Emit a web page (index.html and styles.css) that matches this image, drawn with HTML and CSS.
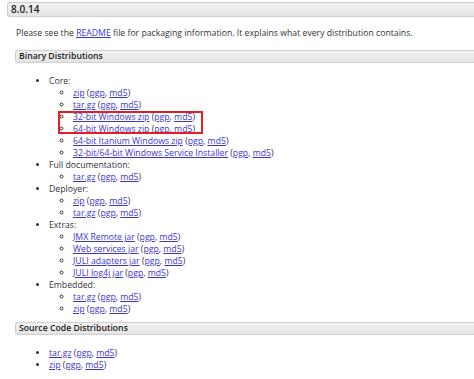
FILE: index.html
```html
<!DOCTYPE html>
<html>
<head>
<meta charset="utf-8">
<link rel="stylesheet" href="styles.css">
</head>
<body>
<div class="page">
  <h3 class="bar bar-main">8.0.14</h3>
  <div class="content">
    <p class="intro">Please see the <a href="#">README</a> file for packaging information. It explains what every distribution contains.</p>
    <h4 class="bar bar-sub">Binary Distributions</h4>
    <ul class="top">
      <li>Core:
        <ul class="sub">
          <li><a href="#">zip</a> (<a href="#">pgp</a>, <a href="#">md5</a>)</li>
          <li><a href="#">tar.gz</a> (<a href="#">pgp</a>, <a href="#">md5</a>)</li>
          <li class="hl"><a href="#">32-bit Windows zip</a> (<a href="#">pgp</a>, <a href="#">md5</a>)</li>
          <li><a href="#">64-bit Windows zip</a> (<a href="#">pgp</a>, <a href="#">md5</a>)</li>
          <li><a href="#">64-bit Itanium Windows zip</a> (<a href="#">pgp</a>, <a href="#">md5</a>)</li>
          <li><a href="#">32-bit/64-bit Windows Service Installer</a> (<a href="#">pgp</a>, <a href="#">md5</a>)</li>
        </ul>
      </li>
      <li>Full documentation:
        <ul class="sub">
          <li><a href="#">tar.gz</a> (<a href="#">pgp</a>, <a href="#">md5</a>)</li>
        </ul>
      </li>
      <li>Deployer:
        <ul class="sub">
          <li><a href="#">zip</a> (<a href="#">pgp</a>, <a href="#">md5</a>)</li>
          <li><a href="#">tar.gz</a> (<a href="#">pgp</a>, <a href="#">md5</a>)</li>
        </ul>
      </li>
      <li>Extras:
        <ul class="sub">
          <li><a href="#">JMX Remote jar</a> (<a href="#">pgp</a>, <a href="#">md5</a>)</li>
          <li><a href="#">Web services jar</a> (<a href="#">pgp</a>, <a href="#">md5</a>)</li>
          <li><a href="#">JULI adapters jar</a> (<a href="#">pgp</a>, <a href="#">md5</a>)</li>
          <li><a href="#">JULI log4j jar</a> (<a href="#">pgp</a>, <a href="#">md5</a>)</li>
        </ul>
      </li>
      <li>Embedded:
        <ul class="sub">
          <li><a href="#">tar.gz</a> (<a href="#">pgp</a>, <a href="#">md5</a>)</li>
          <li><a href="#">zip</a> (<a href="#">pgp</a>, <a href="#">md5</a>)</li>
        </ul>
      </li>
    </ul>
    <h4 class="bar bar-sub bar-source">Source Code Distributions</h4>
    <ul class="top">
      <li><a href="#">tar.gz</a> (<a href="#">pgp</a>, <a href="#">md5</a>)</li>
      <li><a href="#">zip</a> (<a href="#">pgp</a>, <a href="#">md5</a>)</li>
    </ul>
  </div>
</div>
</body>
</html>
```

FILE: styles.css
```css
html, body {
  margin: 0;
  padding: 0;
  background: #ffffff;
}
body {
  font-family: "Open Sans", "Liberation Sans", sans-serif;
  font-size: 8.7px;
  line-height: 12px;
  color: #333333;
}
.page {
  padding-top: 2px;
  padding-left: 7px;
}
a {
  color: #3b36cf;
  text-decoration: underline;
}
.bar {
  margin: 0;
  background: linear-gradient(#f2f2f2, #e4e4e4);
  border: 1px solid #cfcfcf;
  border-right: none;
  border-radius: 3px 0 0 3px;
  font-weight: 600;
  color: #222222;
}
.bar-main {
  font-size: 10px;
  line-height: 13px;
  padding: 0 0 0 3px;
}
.content {
  padding-left: 8px;
}
.intro {
  margin: 10px 0 0 1px;
  line-height: 12px;
}
.bar-sub {
  font-size: 8.7px;
  line-height: 11px;
  padding: 0 0 0 3px;
  margin-top: 11px;
}
.bar-source {
  margin-top: 7px;
}
ul {
  margin: 0;
  padding: 0;
}
ul.top {
  list-style: disc;
  padding-left: 34px;
  margin-top: 12px;
}
ul.sub {
  list-style: circle;
  padding-left: 24px;
}
li.hl {
  position: relative;
}
li.hl::after {
  content: "";
  position: absolute;
  left: -15px;
  top: 0;
  width: 141px;
  height: 19px;
  border: 2px solid #e01f26;
}
```
